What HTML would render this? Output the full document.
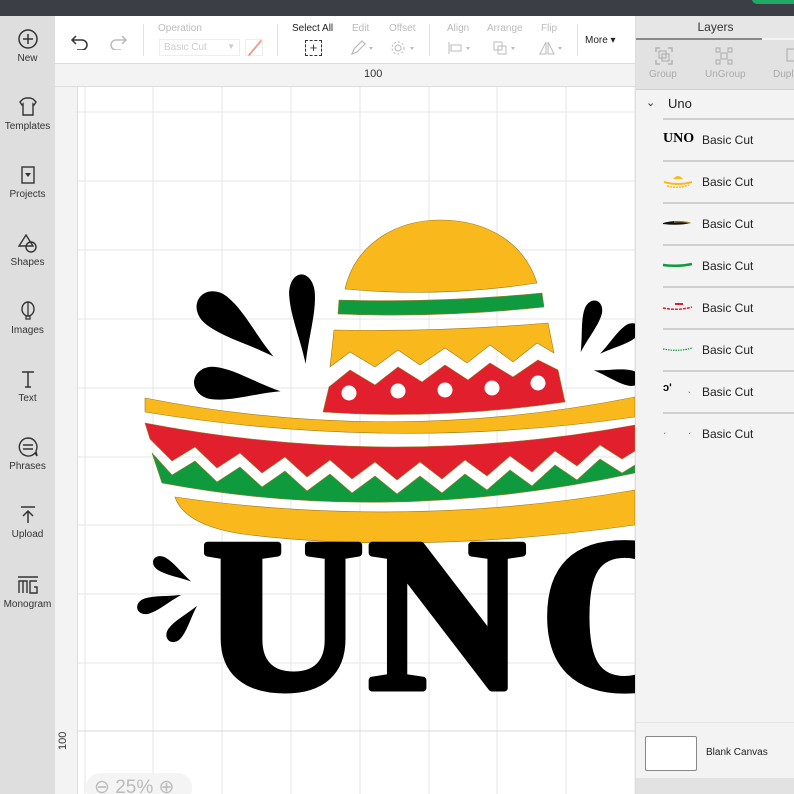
<!DOCTYPE html>
<html><head><meta charset="utf-8"><style>
*{margin:0;padding:0;box-sizing:border-box}
body{width:794px;height:794px;overflow:hidden;position:relative;background:#fff;font-family:"Liberation Sans",sans-serif;color:#333}
.abs{position:absolute}
#top{left:0;top:0;width:794px;height:16px;background:#3b3e45}
#side{left:0;top:16px;width:55px;height:778px;background:#dedede}
.si{position:absolute;left:0;width:55px;text-align:center;font-size:10px;color:#333}
.si svg{display:block;margin:0 auto 3px}
#tool{left:55px;top:16px;width:580px;height:48px;background:#fff;border-bottom:1px solid #ddd}
.tl{position:absolute;font-size:10px;color:#bbb}
#ruler{left:55px;top:64px;width:580px;height:23px;background:#f3f3f3;border-bottom:1px solid #ddd}
#lruler{left:55px;top:87px;width:23px;height:707px;background:#f3f3f3;border-right:1px solid #ddd}
#canvas{left:78px;top:87px;width:557px;height:707px;overflow:hidden}
#panel{left:635px;top:16px;width:159px;height:778px;background:#f3f3f3;border-left:1px solid #ddd}
.row{position:absolute;left:0;width:159px;height:42px}
.row span{position:absolute;left:66px;top:15px;font-size:12px;color:#222}
.sep{position:absolute;left:27px;right:0;height:2px;background:#d0d0d0}
</style></head><body>
<div id="top" class="abs"><div class="abs" style="left:752px;top:-6px;width:50px;height:10px;background:#1fa964;border-radius:6px"></div></div>
<div id="side" class="abs">
 <div class="si" style="top:12px"><svg width="22" height="22" viewBox="0 0 22 22"><circle cx="11" cy="11" r="9" fill="none" stroke="#333" stroke-width="1.5"/><path d="M11 6v10M6 11h10" stroke="#333" stroke-width="1.5"/></svg>New</div>
 <div class="si" style="top:80px"><svg width="20" height="22" viewBox="0 0 20 22"><path d="M5 3l3-1h4l3 1 3 3-2 3-1-1v11H5V8l-1 1-2-3z" fill="none" stroke="#333" stroke-width="1.4"/></svg>Templates</div>
 <div class="si" style="top:148px"><svg width="20" height="22" viewBox="0 0 20 22"><rect x="4" y="3" width="12" height="16" fill="none" stroke="#333" stroke-width="1.4"/><path d="M7 9h6l-3 4z" fill="#333"/></svg>Projects</div>
 <div class="si" style="top:216px"><svg width="22" height="22" viewBox="0 0 22 22"><path d="M9 3l7 11H2z" fill="none" stroke="#333" stroke-width="1.4"/><circle cx="14" cy="15" r="5" fill="none" stroke="#333" stroke-width="1.4"/></svg>Shapes</div>
 <div class="si" style="top:284px"><svg width="20" height="22" viewBox="0 0 20 22"><ellipse cx="10" cy="9" rx="6" ry="7" fill="none" stroke="#333" stroke-width="1.4"/><path d="M10 2v14M8 16h4v3H8z" fill="none" stroke="#333" stroke-width="1.3"/></svg>Images</div>
 <div class="si" style="top:352px"><svg width="20" height="22" viewBox="0 0 20 22"><path d="M4 4h12M10 4v15M7 19h6" stroke="#333" stroke-width="1.5" fill="none"/></svg>Text</div>
 <div class="si" style="top:420px"><svg width="22" height="22" viewBox="0 0 22 22"><path d="M11 2a9 9 0 1 0 7 15l2 3-1-5a9 9 0 0 0-8-13z" fill="none" stroke="#333" stroke-width="1.4"/><path d="M6 9h10M6 13h10" stroke="#333" stroke-width="1.4"/></svg>Phrases</div>
 <div class="si" style="top:488px"><svg width="20" height="22" viewBox="0 0 20 22"><path d="M3 3h14M10 19V7M5 12l5-5 5 5" fill="none" stroke="#333" stroke-width="1.5"/></svg>Upload</div>
 <div class="si" style="top:558px"><svg width="24" height="22" viewBox="0 0 24 22"><path d="M2 3h20M3 19V7h8v12M7 7v12M21 7h-7v12h7v-6h-3" fill="none" stroke="#333" stroke-width="1.4"/></svg>Monogram</div>
</div>
<div id="tool" class="abs">
 <svg class="abs" style="left:15px;top:18px" width="20" height="16" viewBox="0 0 20 16"><path d="M6 2L2 6l4 4M2 6h10a5 5 0 0 1 0 10H7" fill="none" stroke="#333" stroke-width="1.5"/></svg>
 <svg class="abs" style="left:53px;top:18px" width="20" height="16" viewBox="0 0 20 16"><path d="M14 2l4 4-4 4M18 6H8a5 5 0 0 0 0 10h5" fill="none" stroke="#bbb" stroke-width="1.5"/></svg>
 <div class="abs" style="left:88px;top:8px;width:1px;height:32px;background:#e3e3e3"></div>
 <div class="tl" style="left:103px;top:7px">Operation</div>
 <div class="abs" style="left:104px;top:23px;width:81px;height:17px;border:1px solid #eee;font-size:10px;color:#ccc;padding:2px 4px">Basic Cut<span style="float:right;font-size:8px">▼</span></div>
 <div class="abs" style="left:190px;top:23px;width:18px;height:17px;border:1px solid #eee"><div style="position:absolute;left:8px;top:-2px;width:2px;height:20px;background:#f0a090;transform:rotate(40deg)"></div></div>
 <div class="abs" style="left:222px;top:8px;width:1px;height:32px;background:#e3e3e3"></div>
 <div class="tl" style="left:237px;top:7px;color:#222">Select All</div>
 <div class="abs" style="left:250px;top:24px;width:17px;height:16px;border:1px dashed #333;text-align:center;font-size:13px;line-height:13px">+</div>
 <div class="tl" style="left:297px;top:7px">Edit</div>
 <svg class="abs" style="left:294px;top:24px" width="26" height="16"><path d="M3 14l2-5 8-8 3 3-8 8z" fill="none" stroke="#bbb" stroke-width="1.2"/><path d="M20 7l2 3 2-3z" fill="#bbb"/></svg>
 <div class="tl" style="left:334px;top:7px">Offset</div>
 <svg class="abs" style="left:335px;top:24px" width="28" height="16"><circle cx="8" cy="8" r="6" fill="none" stroke="#bbb" stroke-dasharray="2 2"/><circle cx="8" cy="8" r="3" fill="none" stroke="#bbb"/><path d="M20 7l2 3 2-3z" fill="#bbb"/></svg>
 <div class="abs" style="left:374px;top:8px;width:1px;height:32px;background:#e3e3e3"></div>
 <div class="tl" style="left:392px;top:7px">Align</div>
 <svg class="abs" style="left:392px;top:25px" width="28" height="14"><path d="M2 1v12" stroke="#bbb"/><rect x="4" y="4" width="10" height="6" fill="none" stroke="#bbb"/><path d="M19 6l2 3 2-3z" fill="#bbb"/></svg>
 <div class="tl" style="left:432px;top:7px">Arrange</div>
 <svg class="abs" style="left:437px;top:24px" width="28" height="16"><rect x="2" y="2" width="8" height="8" fill="none" stroke="#bbb"/><rect x="6" y="6" width="8" height="8" fill="none" stroke="#bbb"/><path d="M19 7l2 3 2-3z" fill="#bbb"/></svg>
 <div class="tl" style="left:486px;top:7px">Flip</div>
 <svg class="abs" style="left:483px;top:24px" width="28" height="16"><path d="M8 2L2 14h6zM10 2l6 12h-6z" fill="none" stroke="#bbb"/><path d="M20 7l2 3 2-3z" fill="#bbb"/></svg>
 <div class="abs" style="left:522px;top:8px;width:1px;height:32px;background:#e3e3e3"></div>
 <div class="abs" style="left:530px;top:19px;font-size:10px;color:#222">More ▾</div>
</div>
<div id="ruler" class="abs"><div class="abs" style="left:309px;top:4px;font-size:11px;color:#333">100</div></div>
<div id="lruler" class="abs"><div class="abs" style="font-size:11px;color:#333;transform:rotate(-90deg);transform-origin:left top;left:2px;top:663px">100</div></div>
<div id="canvas" class="abs">
<svg width="557" height="707" viewBox="78 87 557 707" style="display:block">
 <g stroke="#e6e6e6" stroke-width="1">
  <path d="M85 87V794M153 87V794M222 87V794M291 87V794M360 87V794M429 87V794M497 87V794M566 87V794M635 87V794"/>
  <path d="M78 112H635M78 181H635M78 250H635M78 319H635M78 388H635M78 457H635M78 525H635M78 594H635M78 663H635"/>
  <path d="M78 731H635" stroke="#d8d8d8"/>
 </g>
 <g stroke="#9a7a20" stroke-width="0.6">
  <path d="M345 289C355 245 395 220 440 220C490 220 525 245 537 283Q440 298 345 289Z" fill="#f9b81b"/>
  <path d="M339 300Q440 303 542 293L544 307Q440 318 338 314Z" fill="#0f9a3d"/>
  <path d="M334 330Q440 332 548 323L554 353L537 343L513 362L490 345L467 363L445 348L420 365L398 350L375 367L350 352L330 367Z" fill="#f9b81b"/>
  <path d="M329 387L350 370L375 385L398 367L422 382L445 365L468 380L490 363L513 377L538 360L558 370L565 402Q440 420 323 412Z" fill="#e21f2c"/>
  <path d="M145 398Q390 446 635 397L635 417Q390 452 145 412Z" fill="#f9b81b"/>
  <path d="M145 423Q390 470 635 425L635 451L622 459L600 445L577 466L555 451L532 472L510 456L487 476L465 460L442 479L420 462L397 480L375 462L352 479L330 460L307 477L285 457L262 473L240 453L217 468L195 447L172 461L150 439Z" fill="#e21f2c"/>
  <path d="M152 453L172 475L195 461L217 482L240 467L262 487L285 471L307 491L330 474L352 493L375 476L397 494L420 476L442 493L465 474L487 490L510 470L532 486L555 465L577 480L600 459L622 473L635 465L635 473Q390 526 162 483Z" fill="#0f9a3d"/>
  <path d="M175 497Q405 530 635 490L635 525Q420 555 250 535Q185 527 175 497Z" fill="#f9b81b"/>
 </g>
 <g fill="#fff"><circle cx="349" cy="393" r="7.5"/><circle cx="398" cy="391" r="7.5"/><circle cx="445" cy="390" r="7.5"/><circle cx="492" cy="388" r="7.5"/><circle cx="538" cy="383" r="7.5"/></g>
 <g fill="#000">
  <path d="M1,0 C0.6,-0.1 0.3,-0.28 0,-0.28 A0.28,0.28 0 0 0 0,0.28 C0.3,0.28 0.6,0.1 1,0 Z" transform="translate(216,310) rotate(39) scale(74,62)"/>
  <path d="M1,0 C0.6,-0.1 0.3,-0.28 0,-0.28 A0.28,0.28 0 0 0 0,0.28 C0.3,0.28 0.6,0.1 1,0 Z" transform="translate(302,294) rotate(87) scale(70,46)"/>
  <path d="M1,0 C0.6,-0.1 0.3,-0.28 0,-0.28 A0.28,0.28 0 0 0 0,0.28 C0.3,0.28 0.6,0.1 1,0 Z" transform="translate(213,383) rotate(7) scale(68,58)"/>
  <path d="M1,0 C0.6,-0.1 0.3,-0.28 0,-0.28 A0.28,0.28 0 0 0 0,0.28 C0.3,0.28 0.6,0.1 1,0 Z" transform="translate(593,312) rotate(107) scale(42,32)"/>
  <path d="M1,0 C0.6,-0.1 0.3,-0.28 0,-0.28 A0.28,0.28 0 0 0 0,0.28 C0.3,0.28 0.6,0.1 1,0 Z" transform="translate(630,332) rotate(144) scale(37,28)"/>
  <path d="M1,0 C0.6,-0.1 0.3,-0.28 0,-0.28 A0.28,0.28 0 0 0 0,0.28 C0.3,0.28 0.6,0.1 1,0 Z" transform="translate(630,378) rotate(192) scale(37,28)"/>
  <path d="M1,0 C0.6,-0.1 0.3,-0.28 0,-0.28 A0.28,0.28 0 0 0 0,0.28 C0.3,0.28 0.6,0.1 1,0 Z" transform="translate(162,564) rotate(31) scale(34,26)"/>
  <path d="M1,0 C0.6,-0.1 0.3,-0.28 0,-0.28 A0.28,0.28 0 0 0 0,0.28 C0.3,0.28 0.6,0.1 1,0 Z" transform="translate(147,606) rotate(-18) scale(36,28)"/>
  <path d="M1,0 C0.6,-0.1 0.3,-0.28 0,-0.28 A0.28,0.28 0 0 0 0,0.28 C0.3,0.28 0.6,0.1 1,0 Z" transform="translate(175,633) rotate(-51) scale(35,28)"/>
 </g>
 <g font-family="Liberation Serif,serif" font-weight="bold" font-size="218" fill="#000" stroke="#000" stroke-width="7" stroke-linejoin="round">
  <text transform="translate(202,688) scale(1.03,1)">U</text>
  <text transform="translate(368,688) scale(1.0,1)">N</text>
  <text transform="translate(540,688) scale(1.0,1)">O</text>
 </g>
</svg>
<div class="abs" style="left:8px;top:686px;width:106px;height:30px;border-radius:14px;background:#f4f4f4;font-size:19px;color:#bbb;padding:3px 8px">⊖ 25% ⊕</div>
</div>
<div id="panel" class="abs">
 <div class="abs" style="left:0;top:0;width:159px;height:22px;text-align:center;font-size:12px;line-height:22px;color:#333;background:#e6e6e6">Layers</div>
 <div class="abs" style="left:0;top:22px;width:126px;height:2px;background:#888"></div>
 <div class="abs" style="left:0;top:24px;width:159px;height:50px;background:#e2e2e2;border-bottom:1px solid #d0d0d0"></div>
 <svg class="abs" style="left:18px;top:30px" width="20" height="20"><path d="M2 6V2h4M14 2h4v4M18 14v4h-4M6 18H2v-4" fill="none" stroke="#aaa" stroke-width="1.3"/><rect x="5" y="5" width="7" height="7" fill="none" stroke="#aaa"/><rect x="8" y="8" width="7" height="7" fill="none" stroke="#aaa"/></svg>
 <svg class="abs" style="left:78px;top:30px" width="20" height="20"><rect x="2" y="2" width="4" height="4" fill="none" stroke="#aaa"/><rect x="14" y="2" width="4" height="4" fill="none" stroke="#aaa"/><rect x="2" y="14" width="4" height="4" fill="none" stroke="#aaa"/><rect x="14" y="14" width="4" height="4" fill="none" stroke="#aaa"/><rect x="7" y="7" width="6" height="6" fill="none" stroke="#aaa"/></svg>
 <svg class="abs" style="left:150px;top:30px" width="10" height="20"><rect x="1" y="3" width="10" height="12" fill="none" stroke="#aaa"/></svg>
 <div class="abs" style="left:13px;top:53px;font-size:10px;color:#aaa">Group</div>
 <div class="abs" style="left:69px;top:53px;font-size:10px;color:#aaa">UnGroup</div>
 <div class="abs" style="left:137px;top:53px;font-size:10px;color:#aaa">Dupl</div>
 <div class="abs" style="left:10px;top:80px;font-size:11px;color:#333">⌄</div>
 <div class="abs" style="left:32px;top:80px;font-size:13px;color:#222">Uno</div>
 <div class="sep" style="top:102px"></div>
 <div class="row" style="top:102px"><div class="abs" style="left:27px;top:13px;font-family:'Liberation Serif',serif;font-weight:bold;font-size:14px;color:#000">UNO</div><span>Basic Cut</span></div>
 <div class="sep" style="top:144px"></div>
 <div class="row" style="top:144px"><svg class="abs" style="left:26px;top:12px" width="32" height="18"><path d="M11 7Q16 1 21 7Z" fill="#f9b81b"/><path d="M2 10Q16 14 30 10" stroke="#f9b81b" stroke-width="2" fill="none"/><path d="M5 14Q16 17 27 13" stroke="#f9b81b" stroke-width="1.5" fill="none" stroke-dasharray="2 1"/></svg><span>Basic Cut</span></div>
 <div class="sep" style="top:186px"></div>
 <div class="row" style="top:186px"><svg class="abs" style="left:26px;top:16px" width="32" height="10"><path d="M1 5Q16 1 29 5Q16 8 1 6Z" fill="#111"/><path d="M12 4Q22 3 28 5" stroke="#b08020" stroke-width="1.2" fill="none"/></svg><span>Basic Cut</span></div>
 <div class="sep" style="top:228px"></div>
 <div class="row" style="top:228px"><svg class="abs" style="left:26px;top:16px" width="32" height="10"><path d="M1 5Q16 7 30 4" stroke="#0f9a3d" stroke-width="2.5" fill="none"/></svg><span>Basic Cut</span></div>
 <div class="sep" style="top:270px"></div>
 <div class="row" style="top:270px"><svg class="abs" style="left:26px;top:14px" width="32" height="12"><path d="M13 4h8" stroke="#e21f2c" stroke-width="2"/><path d="M1 8Q16 11 30 7" stroke="#e21f2c" stroke-width="1.5" fill="none" stroke-dasharray="3 1"/></svg><span>Basic Cut</span></div>
 <div class="sep" style="top:312px"></div>
 <div class="row" style="top:312px"><svg class="abs" style="left:26px;top:16px" width="32" height="10"><path d="M1 5Q16 8 30 4" stroke="#0f9a3d" stroke-width="1.2" fill="none" stroke-dasharray="1.5 1"/></svg><span>Basic Cut</span></div>
 <div class="sep" style="top:354px"></div>
 <div class="row" style="top:354px"><div class="abs" style="left:27px;top:12px;font-size:11px;font-weight:bold;color:#000">ɔ'</div><div class="abs" style="left:52px;top:13px;font-size:9px;color:#333">ˎ</div><span>Basic Cut</span></div>
 <div class="sep" style="top:396px"></div>
 <div class="row" style="top:396px"><div class="abs" style="left:27px;top:12px;font-size:9px;color:#555">ˏ</div><div class="abs" style="left:52px;top:12px;font-size:9px;color:#555">ˏ</div><span>Basic Cut</span></div>
 <div class="abs" style="left:0;top:706px;width:159px;height:1px;background:#e4e4e4"></div>
 <div class="abs" style="left:9px;top:720px;width:52px;height:35px;border:1px solid #888;border-radius:2px;background:#fff"></div>
 <div class="abs" style="left:70px;top:731px;font-size:10px;color:#222">Blank Canvas</div>
 <div class="abs" style="left:0;top:762px;width:159px;height:16px;background:#e2e2e2"></div>
</div>
</body></html>
